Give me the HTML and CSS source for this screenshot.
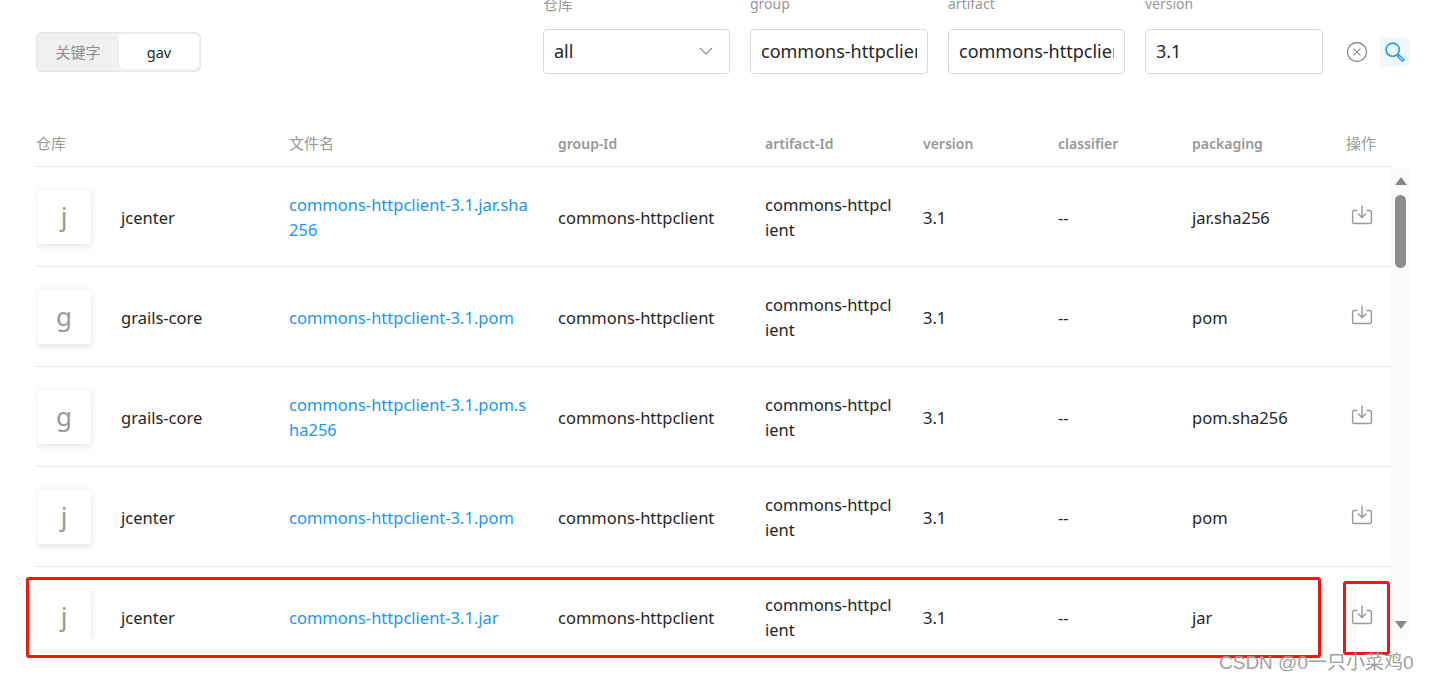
FILE: index.html
```html
<!DOCTYPE html>
<html lang="zh">
<head>
<meta charset="utf-8">
<title>gav</title>
<link rel="stylesheet" href="styles.css">
</head>
<body>
<svg class="defs" width="0" height="0" aria-hidden="true">
  <symbol id="dl" viewBox="0 0 22 22">
    <path d="M6.5 6.5H3.2a1.6 1.6 0 0 0-1.6 1.6v9.6a1.8 1.8 0 0 0 1.8 1.8h15.2a1.8 1.8 0 0 0 1.8-1.8V8.1a1.6 1.6 0 0 0-1.6-1.6h-3.3M11 1.5v11.8M6.8 9.4l4.2 4.2 4.2-4.2" fill="none" stroke="currentColor" stroke-width="1.4"/>
  </symbol>
</svg>
<main class="page">
  <header class="toolbar">
    <div class="toggle">
      <span class="toggle-item">关键字</span>
      <span class="toggle-item active">gav</span>
    </div>
    <form class="filters">
      <div class="field f-repo">
        <span class="field-label zh">仓库</span>
        <div class="control select"><span>all</span>
          <svg class="chev" width="14" height="8" viewBox="0 0 14 8"><path d="M1 1l6 6 6-6" fill="none" stroke="currentColor" stroke-width="1.1"/></svg>
        </div>
      </div>
      <div class="field f-group">
        <span class="field-label">group</span>
        <div class="control"><span class="clip">commons-httpclient</span></div>
      </div>
      <div class="field f-art">
        <span class="field-label">artifact</span>
        <div class="control"><span class="clip">commons-httpclient</span></div>
      </div>
      <div class="field f-ver">
        <span class="field-label">version</span>
        <div class="control"><span class="clip">3.1</span></div>
      </div>
      <div class="actions">
        <svg class="clear" width="22" height="22" viewBox="0 0 22 22"><circle cx="11" cy="11" r="9.5" fill="none" stroke="currentColor" stroke-width="1.3"/><path d="M7.6 7.6l6.8 6.8M14.4 7.6l-6.8 6.8" fill="none" stroke="currentColor" stroke-width="1.2"/></svg>
        <span class="search">
          <svg width="22" height="22" viewBox="0 0 22 22"><circle cx="8.7" cy="8.7" r="6.6" fill="none" stroke="currentColor" stroke-width="1.6"/><path d="M13.6 13.6l1.6 1.6" stroke="currentColor" stroke-width="1.6"/><path d="M15.4 14.2l4.6 4.6-1.6 1.6-4.6-4.6z" fill="none" stroke="currentColor" stroke-width="1.3"/></svg>
        </span>
      </div>
    </form>
  </header>

  <section class="table">
    <div class="row head">
      <div>仓库</div><div>文件名</div><div class="latin">group-Id</div><div class="latin">artifact-Id</div><div class="latin">version</div><div class="latin">classifier</div><div class="latin">packaging</div><div>操作</div>
    </div>
    <div class="body-wrap">
      <div class="rows">
        <div class="row">
          <div class="repo"><span class="card">j</span><span>jcenter</span></div>
          <div class="link">commons-httpclient-3.1.jar.sha256</div><div>commons-httpclient</div><div class="art">commons-httpclient</div><div>3.1</div><div>--</div><div>jar.sha256</div>
          <div class="op"><svg width="22" height="22"><use href="#dl"/></svg></div>
        </div>
        <div class="row">
          <div class="repo"><span class="card">g</span><span>grails-core</span></div>
          <div class="link">commons-httpclient-3.1.pom</div><div>commons-httpclient</div><div class="art">commons-httpclient</div><div>3.1</div><div>--</div><div>pom</div>
          <div class="op"><svg width="22" height="22"><use href="#dl"/></svg></div>
        </div>
        <div class="row">
          <div class="repo"><span class="card">g</span><span>grails-core</span></div>
          <div class="link">commons-httpclient-3.1.pom.sha256</div><div>commons-httpclient</div><div class="art">commons-httpclient</div><div>3.1</div><div>--</div><div>pom.sha256</div>
          <div class="op"><svg width="22" height="22"><use href="#dl"/></svg></div>
        </div>
        <div class="row">
          <div class="repo"><span class="card">j</span><span>jcenter</span></div>
          <div class="link">commons-httpclient-3.1.pom</div><div>commons-httpclient</div><div class="art">commons-httpclient</div><div>3.1</div><div>--</div><div>pom</div>
          <div class="op"><svg width="22" height="22"><use href="#dl"/></svg></div>
        </div>
        <div class="row">
          <div class="repo"><span class="card">j</span><span>jcenter</span></div>
          <div class="link">commons-httpclient-3.1.jar</div><div>commons-httpclient</div><div class="art">commons-httpclient</div><div>3.1</div><div>--</div><div>jar</div>
          <div class="op"><svg width="22" height="22"><use href="#dl"/></svg></div>
        </div>
      </div>
      <div class="scrollbar">
        <span class="arrow up"></span>
        <span class="thumb"></span>
        <span class="arrow down"></span>
      </div>
    </div>
  </section>
</main>
<div class="mark mark-row"></div>
<div class="mark mark-op"></div>
<div class="watermark">CSDN @0一只小菜鸡0</div>
</body>
</html>
```

FILE: styles.css
```css
html, body { margin: 0; padding: 0; height: 100%; overflow: hidden; background: #fff; }
body {
  position: relative;
  font-family: "Noto Sans", "Noto Sans CJK SC", sans-serif;
  font-size: 16.5px;
  color: #262626;
}
.defs { position: absolute; }
.page { padding: 0 19px 0 36px; }

.toolbar { display: flex; justify-content: space-between; align-items: flex-start; height: 125px; }
.toggle {
  display: flex;
  width: 165px;
  height: 40px;
  margin-top: 32px;
  box-sizing: border-box;
  padding: 2px;
  border-radius: 6px;
  background: #f0f0f0;
  box-shadow: inset 0 0 0 1px #e6e6e6;
}
.toggle-item { flex: 1; display: flex; align-items: center; justify-content: center; font-size: 15px; color: #8c8c8c; padding-right: 1px; padding-bottom: 1px; }
.toggle-item.active { flex: 0 0 80px; height: 35px; background: #fff; color: #262626; border-radius: 5px; padding: 0; font-size: 14.5px; }

.filters { display: flex; align-items: flex-start; margin-top: -7px; }
.field { display: flex; flex-direction: column; gap: 14px; }
.f-repo { width: 187px; margin-right: 20px; }
.f-group { width: 178px; margin-right: 20px; }
.f-art { width: 177px; margin-right: 20px; }
.f-ver { width: 178px; }
.field-label { font-size: 14px; line-height: 22px; color: #999; }
.field-label.zh { font-size: 15px; }
.control {
  display: flex;
  align-items: center;
  justify-content: space-between;
  height: 45px;
  box-sizing: border-box;
  padding: 0 10px 2px;
  border: 1px solid #d9d9d9;
  border-radius: 4px;
  font-size: 18px;
  background: #fff;
}
.clip { flex: 1; overflow: hidden; white-space: nowrap; }
.chev { color: #8c8c8c; margin-right: 6px; }
.actions { display: flex; align-items: center; gap: 12px; margin: 44px 0 0 23px; }
.clear { color: #8c8c8c; }
.search {
  display: flex; align-items: center; justify-content: center;
  width: 30px; height: 30px; border-radius: 4px; background: #f0f8ff; color: #1e9bf0;
}

.table { width: 1373px; }
.row {
  display: grid;
  grid-template-columns: 253px 269px 207px 158px 135px 134px 154px 45px;
  align-items: center;
  width: 1355px;
  height: 100px;
  box-sizing: border-box;
  padding-top: 1px;
  border-bottom: 1px solid #e8e8e8;
  line-height: 25px;
}
.row.head { height: 42px; font-size: 15px; color: #999; line-height: 20px; padding: 0 0 6px; }
.latin { font-size: 14px; font-weight: 600; padding-top: 2px; }
.body-wrap { display: flex; height: 472px; overflow: hidden; }
.rows { width: 1355px; flex: none; }
.repo { display: flex; align-items: center; gap: 30px; }
.card {
  display: flex; align-items: center; justify-content: center;
  width: 54px; height: 54px; margin: 0 0 1px 1px;
  border-radius: 4px; background: #fff;
  box-shadow: 0 2px 8px rgba(0,0,0,.12);
  font-size: 26px; color: #999;
}
.link { color: #2196f3; width: 241px; word-break: break-all; }
.art { width: 128px; word-break: break-all; }
.op { display: flex; padding: 0 0 5px 5px; color: #999; }

.scrollbar {
  flex: none;
  width: 18px;
  display: flex; flex-direction: column; align-items: center;
  background: #fafafa;
  padding: 10px 0 0 1px;
  box-sizing: border-box;
}
.arrow { width: 0; height: 0; border-left: 6px solid transparent; border-right: 6px solid transparent; }
.up { border-bottom: 8px solid #888; }
.down { border-top: 8px solid #888; margin-top: 353px; }
.thumb { width: 11px; height: 73px; margin-top: 10px; border-radius: 6px; background: #8c8c8c; }

.mark { position: absolute; box-sizing: border-box; border: 3px solid #f5170f; border-radius: 3px; }
.mark-row { left: 26px; top: 577px; width: 1295px; height: 81px; }
.mark-op { left: 1343px; top: 581px; width: 47px; height: 74px; }
.watermark {
  position: absolute; left: 1219px; top: 650px;
  font-size: 19px; line-height: 26px; color: #a0a0a0; white-space: nowrap;
  font-family: "Liberation Sans", "Noto Sans CJK SC", sans-serif;
}
```
